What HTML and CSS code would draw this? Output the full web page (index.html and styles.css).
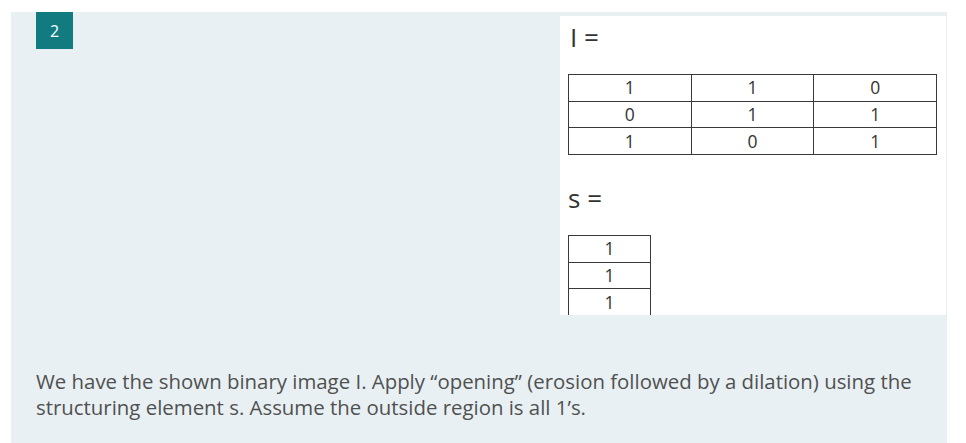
FILE: index.html
```html
<!DOCTYPE html>
<html>
<head>
<meta charset="utf-8">
<link rel="stylesheet" href="styles.css">
</head>
<body>
<div class="panel">
  <div class="top">
    <div class="badge">2</div>
    <div class="figure">
      <div class="label">I =</div>
      <table class="grid grid-i">
        <tr><td>1</td><td>1</td><td>0</td></tr>
        <tr><td>0</td><td>1</td><td>1</td></tr>
        <tr><td>1</td><td>0</td><td>1</td></tr>
      </table>
      <div class="label label-s">s =</div>
      <table class="grid grid-s">
        <tr><td>1</td></tr>
        <tr><td>1</td></tr>
        <tr><td>1</td></tr>
      </table>
    </div>
  </div>
  <p class="question">We have the shown binary image I. Apply “opening” (erosion followed by a dilation) using the structuring element s. Assume the outside region is all 1’s.</p>
</div>
</body>
</html>
```
FILE: styles.css
```css
html, body {
  margin: 0;
  padding: 0;
  background: #ffffff;
}
body {
  padding: 12px 19px 0 11px;
  font-family: "Open Sans", "Noto Sans", sans-serif;
}
.panel {
  background: #e8f0f3;
  padding: 0 1px 0 25px;
  height: 431px;
  overflow: hidden;
}
.top {
  display: flex;
  justify-content: space-between;
  align-items: flex-start;
}
.badge {
  width: 37px;
  height: 37px;
  background: #127b7f;
  color: #ffffff;
  font-size: 16px;
  display: flex;
  align-items: center;
  justify-content: center;
}
.figure {
  margin-top: 4px;
  width: 386px;
  height: 299px;
  background: #ffffff;
  overflow: hidden;
  padding-left: 8px;
  box-sizing: border-box;
  font-family: "Open Sans", sans-serif;
  color: #333333;
}
.label {
  font-size: 26px;
  line-height: 30px;
  margin-top: 6px;
  padding-left: 2px;
}
.label-s {
  margin-top: 28px;
  padding-left: 0;
}
.grid {
  border-collapse: collapse;
  font-size: 17.5px;
}
.grid td {
  border: 1px solid #3a3a3a;
  text-align: center;
  height: 25.67px;
  padding: 0;
  line-height: 25px;
}
.grid-i {
  margin-top: 22px;
  width: 369px;
}
.grid-i td {
  width: 123px;
}
.grid-s {
  margin-top: 22px;
  width: 83px;
}
.question {
  margin: 53px 0 0 0;
  font-size: 20.4px;
  line-height: 26px;
  color: #505050;
  padding-right: 10px;
}
```
